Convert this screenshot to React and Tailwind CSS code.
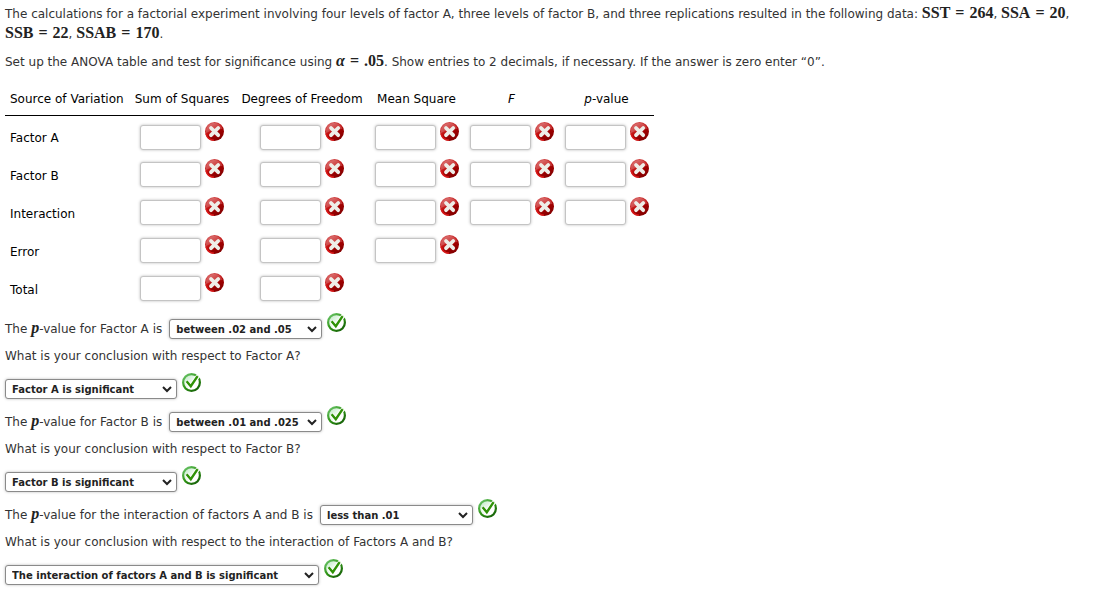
import React from 'react';

const columns = [
  { key: 'ss', label: 'Sum of Squares', width: 'w-[106px]' },
  { key: 'df', label: 'Degrees of Freedom', width: 'w-[134px]' },
  { key: 'ms', label: 'Mean Square', width: 'w-[95px]' },
  { key: 'f', label: 'F', width: 'w-[95px]' },
  { key: 'p', label: 'p-value', width: 'w-[95px]' },
];

// inputs = how many of the columns can be filled in for that source
const rows = [
  { source: 'Factor A', inputs: 5 },
  { source: 'Factor B', inputs: 5 },
  { source: 'Interaction', inputs: 5 },
  { source: 'Error', inputs: 3 },
  { source: 'Total', inputs: 2 },
];

const questions = [
  {
    id: 'factor-a',
    subject: 'Factor A',
    range: 'between .02 and .05',
    ask: 'Factor A',
    conclusion: 'Factor A is significant',
    width: 'w-[172px]',
  },
  {
    id: 'factor-b',
    subject: 'Factor B',
    range: 'between .01 and .025',
    ask: 'Factor B',
    conclusion: 'Factor B is significant',
    width: 'w-[172px]',
  },
  {
    id: 'interaction',
    subject: 'the interaction of factors A and B',
    range: 'less than .01',
    ask: 'the interaction of Factors A and B',
    conclusion: 'The interaction of factors A and B is significant',
    width: 'w-[314px]',
  },
];

const ranges = ['less than .01', 'between .01 and .025', 'between .02 and .05', 'between .05 and .10', 'greater than .10'];

const WrongIcon = () => (
  <svg className="w-[19px] h-[19px] shrink-0" viewBox="0 0 19 19" role="img" aria-label="Incorrect">
    <defs>
      <linearGradient id="wrong-ball" x1="0.2" y1="0" x2="0.8" y2="1">
        <stop offset="0" stopColor="#d86060" />
        <stop offset="0.45" stopColor="#c01010" />
        <stop offset="0.6" stopColor="#a00000" />
        <stop offset="1" stopColor="#7c0000" />
      </linearGradient>
    </defs>
    <circle cx="9.5" cy="9.5" r="9.5" fill="url(#wrong-ball)" />
    <path d="M1 11.5A8.6 8.6 0 0 0 9 18.2" fill="none" stroke="#d81818" strokeWidth="1.4" />
    <path d="M1 9.5a8.5 8.5 0 0 1 16.6-2.6C12 7 6 8 1 11z" fill="#fff" opacity="0.18" />
    <path d="M6 6l7.2 7.2M13.2 6L6 13.2" stroke="#eeeee8" strokeWidth="3.8" strokeLinecap="round" />
  </svg>
);

const RightIcon = () => (
  <svg className="w-[19px] h-[19px] shrink-0" viewBox="0 0 19 19" role="img" aria-label="Correct">
    <defs>
      <linearGradient id="right-ring" x1="0.1" y1="0" x2="0.9" y2="1">
        <stop offset="0" stopColor="#6ac46a" />
        <stop offset="0.5" stopColor="#2f9414" />
        <stop offset="1" stopColor="#145c08" />
      </linearGradient>
      <linearGradient id="right-fill" x1="0" y1="0" x2="1" y2="1">
        <stop offset="0" stopColor="#b4e6ba" />
        <stop offset="0.6" stopColor="#ffffff" />
      </linearGradient>
    </defs>
    <circle cx="9.5" cy="9.5" r="8.4" fill="url(#right-fill)" stroke="url(#right-ring)" strokeWidth="2.2" />
    <path d="M4.4 8.4l4.4 5 7.4-10.6" fill="none" stroke="#fff" strokeWidth="4.2" />
    <path d="M4.6 8.2l4.2 5 6.8-10" fill="none" stroke="#2f9206" strokeWidth="2.4" />
  </svg>
);

const MathText = ({ children }) => (
  <span className="font-['Liberation_Serif',serif] text-[16px] leading-none font-bold text-[#222] whitespace-nowrap">{children}</span>
);

const Equation = ({ name, value }) => (
  <MathText>
    {name}
    <span className="mx-[5px]">=</span>
    {value}
  </MathText>
);

const AnswerSelect = ({ label, value, options, width }) => (
  <span className={`relative block mt-[6px] ${width}`}>
    <select
      aria-label={label}
      defaultValue={value}
      className="block w-full h-5 appearance-none rounded-[3px] border border-[#8a8a8a] bg-white pl-[6px] pr-4 text-[10px] font-bold text-[#222] shadow-[0_0_3px_#bbb]"
    >
      {options.map((option) => (
        <option key={option}>{option}</option>
      ))}
    </select>
    <svg className="absolute right-[5px] top-[7px] w-[10px] h-[7px] pointer-events-none" viewBox="0 0 10 7">
      <path d="M1 1l4 4 4-4" fill="none" stroke="#222" strokeWidth="2" />
    </svg>
  </span>
);

const Question = ({ question }) => {
  const { id, subject, range, ask, conclusion, width } = question;
  return (
    <section className="mb-[7px]">
      <div className="flex items-start">
        <span className="pt-[6px] mr-[7px] whitespace-pre">
          The <MathText><i>p</i></MathText>-value for {subject} is
        </span>
        <AnswerSelect label={`p-value for ${subject}`} value={range} options={ranges} width="w-[153px]" />
        <span className="ml-[5px]"><RightIcon /></span>
      </div>
      <p className="my-2 leading-[18px]" id={`${id}-question`}>What is your conclusion with respect to {ask}?</p>
      <div className="flex items-start">
        <AnswerSelect
          label={`Conclusion for ${ask}`}
          value={conclusion}
          options={[conclusion, conclusion.replace('is significant', 'is not significant')]}
          width={width}
        />
        <span className="ml-[5px]"><RightIcon /></span>
      </div>
    </section>
  );
};

const AnovaTable = () => (
  <table className="table-fixed w-[649px] mt-3 text-black border-collapse">
    <thead>
      <tr className="h-[31px] border-b border-black">
        <th className="w-[124px] pl-[5px] font-normal text-left whitespace-nowrap">Source of Variation</th>
        {columns.map((col) => (
          <th key={col.key} className={`${col.width} font-normal text-center whitespace-nowrap`}>
            {col.key === 'f' && <i>F</i>}
            {col.key === 'p' && <><i>p</i>-value</>}
            {col.key !== 'f' && col.key !== 'p' && col.label}
          </th>
        ))}
      </tr>
    </thead>
    <tbody>
      {rows.map((row) => (
        <tr key={row.source} className="h-[38px]">
          <th className="pl-[5px] pt-2 font-normal text-left">{row.source}</th>
          {columns.map((col, i) => (
            <td key={col.key} className="align-top pt-[6px]">
              {i < row.inputs && (
                <div className="flex items-start justify-center gap-1">
                  <input
                    type="text"
                    aria-label={`${row.source} ${col.label}`}
                    className="w-[61px] h-[25px] mt-[3px] px-1 rounded-[3px] border border-[#c4c4c4] bg-white shadow-[0_0_3px_#bbb]"
                  />
                  <WrongIcon />
                </div>
              )}
            </td>
          ))}
        </tr>
      ))}
    </tbody>
  </table>
);

const App = () => {
  return (
    <main className="px-[5px] pt-1 bg-white font-['DejaVu_Sans',Verdana,sans-serif] text-[12px] leading-5 text-[#333]">
      <p>
        The calculations for a factorial experiment involving four levels of factor A, three levels of factor B, and three
        replications resulted in the following data: <Equation name="SST" value="264" />, <Equation name="SSA" value="20" />,{' '}
        <Equation name="SSB" value="22" />, <Equation name="SSAB" value="170" />.
      </p>
      <p className="mt-2">
        Set up the ANOVA table and test for significance using <Equation name={<i>α</i>} value=".05" />. Show entries to 2
        decimals, if necessary. If the answer is zero enter “0”.
      </p>
      <AnovaTable />
      <div className="mt-2">
        {questions.map((question) => (
          <Question key={question.id} question={question} />
        ))}
      </div>
    </main>
  );
};

export default App;
